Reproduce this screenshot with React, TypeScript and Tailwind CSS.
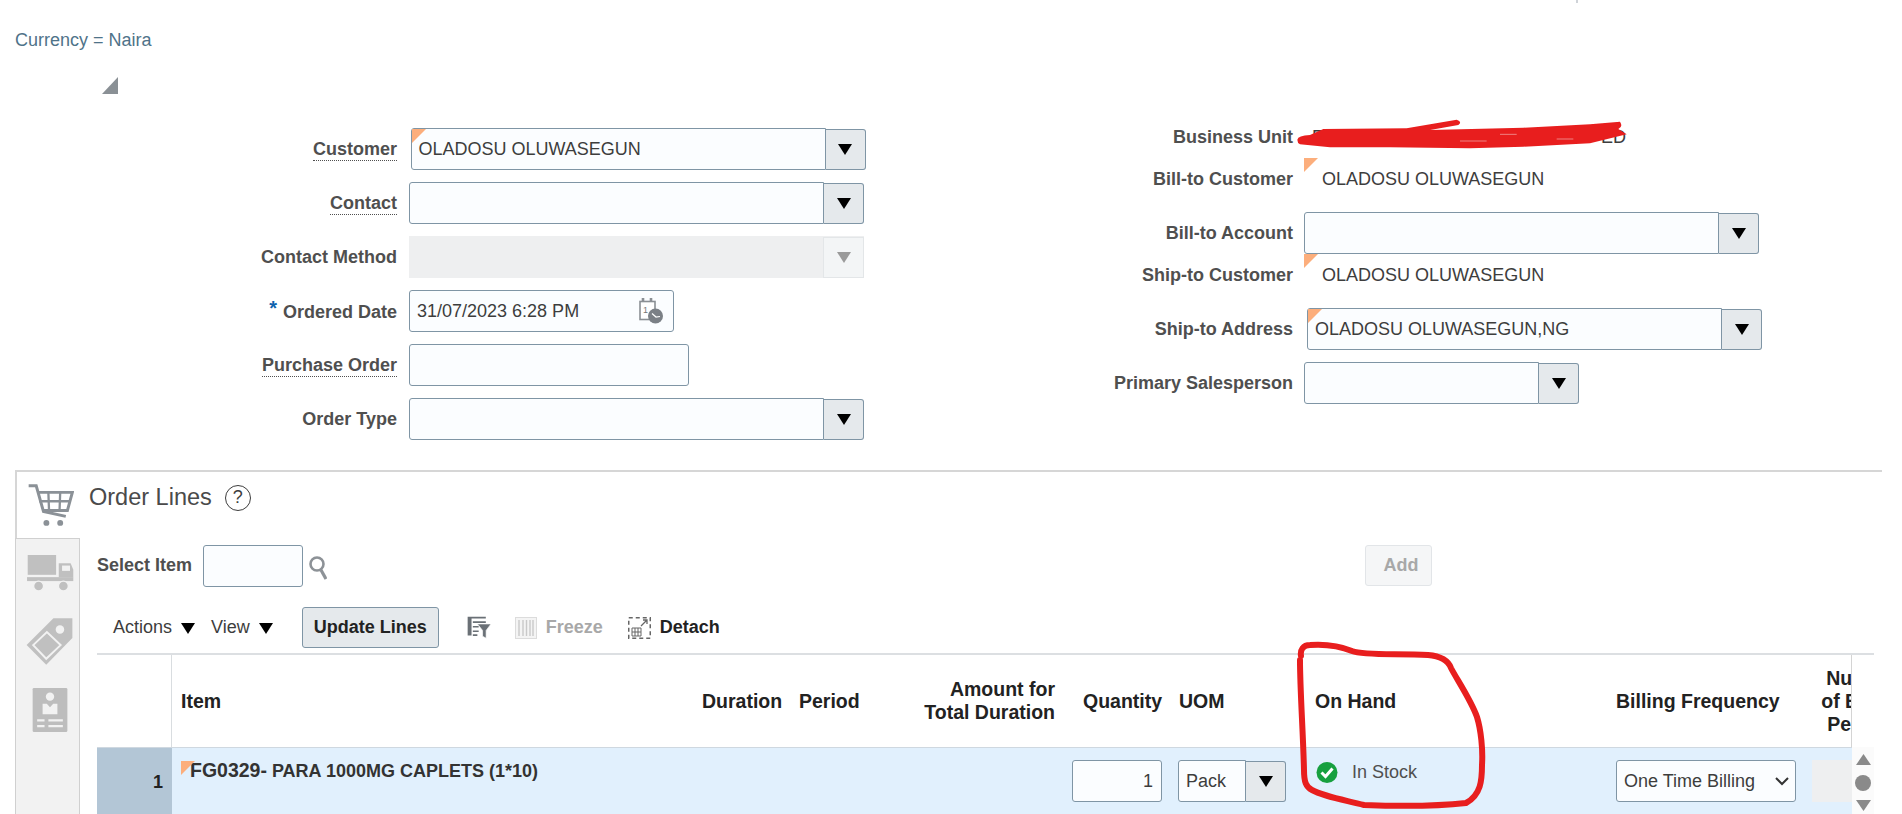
import type { ReactNode } from "react";

const border = "border border-[#7f95a5]";

function Corner({ className = "" }: { className?: string }) {
  return (
    <span
      className={`absolute w-0 h-0 border-t-[14px] border-r-[14px] border-t-[#fcae7c] border-r-transparent ${className}`}
    />
  );
}

function Caret({ muted }: { muted?: boolean }) {
  return (
    <svg width="14" height="11" viewBox="0 0 14 11">
      <path d="M0 0H14L7 11Z" fill={muted ? "#9a9a9a" : "#000"} />
    </svg>
  );
}

function Combo({ w, value, corner, disabled, wBtn = 41, h = 42, text = "text-[18px]" }: { w: number; value?: string; corner?: boolean; disabled?: boolean; wBtn?: number; h?: number; text?: string }) {
  if (disabled) {
    return (
      <div className="flex bg-[#eeeff0]" style={{ width: w + wBtn, height: h }}>
        <div className="flex-1" />
        <div className="flex items-center justify-center bg-[#f3f5f6] border border-[#e3e6e8] mt-[1px]" style={{ width: wBtn }}>
          <Caret muted />
        </div>
      </div>
    );
  }
  return (
    <div className="flex" style={{ height: h }}>
      <div className={`relative flex items-center pl-[7px] bg-[#fbfdff] rounded-l-[3px] ${border} ${text} text-[#3d3d3d]`} style={{ width: w }}>
        {corner && <Corner className="left-0 top-0" />}
        {value}
      </div>
      <div className="flex items-center justify-center bg-[#e5e9ec] rounded-r-[3px] mt-[1px] border border-l-0 border-[#7f95a5]" style={{ width: wBtn - 1 }}>
        <Caret />
      </div>
    </div>
  );
}

function Field({ label, width, dotted, required, children }: { label: string; width: number; dotted?: boolean; required?: boolean; children: ReactNode }) {
  return (
    <div className="flex items-center h-[42px]">
      <div className="shrink-0 text-right text-[18px] font-bold text-[#4f4f4f]" style={{ width }}>
        {required && <span className="relative -top-[3px] mr-[6px] text-[#0e62ae] font-bold text-[20px]">*</span>}
        <span className={dotted ? "border-b border-dotted border-[#4f4f4f] pb-[1px]" : ""}>{label}</span>
      </div>
      <div className="ml-[12px]">{children}</div>
    </div>
  );
}

function ReadOnly({ value }: { value: string }) {
  return (
    <div className="relative h-[42px] flex items-center pl-[18px] text-[18px] text-[#3d3d3d]">
      <Corner className="left-0 top-0" />
      {value}
    </div>
  );
}

function CalendarIcon() {
  return (
    <svg width="25" height="26" viewBox="0 0 25 26">
      <path d="M4 0V5M12 0V5" stroke="#8a8f94" strokeWidth="2.6" />
      <rect x="1" y="3.5" width="15" height="18" fill="#fff" stroke="#8a8f94" strokeWidth="1.6" />
      <text x="4" y="15" fontSize="9" fill="#777" fontFamily="'Liberation Sans', sans-serif">1</text>
      <circle cx="16.5" cy="18" r="7.5" fill="#7b8086" />
      <path d="M13 15.5L17 19L21 18.5" stroke="#fff" strokeWidth="1.2" fill="none" />
    </svg>
  );
}

function CartIcon() {
  return (
    <svg width="46" height="43" viewBox="50 45 140 130">
      <g fill="none" stroke="#8b9197">
        <path d="M52 50H75L97 128L165 143" strokeWidth="9" />
        <path d="M80 70H185L170 125H96" strokeWidth="9" />
        <path d="M84 97H178M112 70L114 125M148 70L146 125" strokeWidth="7" />
      </g>
      <circle cx="106" cy="163" r="9" fill="#8b9197" />
      <circle cx="148" cy="163" r="9" fill="#8b9197" />
    </svg>
  );
}

function TruckIcon() {
  return (
    <svg width="48" height="38" viewBox="47 252 145 115">
      <rect x="52" y="255" width="86" height="60" fill="#c0c0c0" />
      <path d="M146 280H182L190 300V322H146Z" fill="#c0c0c0" />
      <rect x="156" y="287" width="24" height="16" fill="#f2f2f2" />
      <rect x="50" y="322" width="140" height="12" fill="#c0c0c0" />
      <circle cx="85" cy="349" r="15" fill="#c0c0c0" stroke="#f2f2f2" strokeWidth="4" />
      <circle cx="160" cy="349" r="15" fill="#c0c0c0" stroke="#f2f2f2" strokeWidth="4" />
    </svg>
  );
}

function TagIcon() {
  return (
    <svg width="47" height="49" viewBox="46 32 144 150">
      <path d="M48 118L130 36H188V96L108 178Z" fill="#c0c0c0" strokeLinejoin="round" />
      <circle cx="150" cy="70" r="13" fill="#f2f2f2" />
      <path d="M68 118L110 78L152 118L108 160Z" fill="none" stroke="#f2f2f2" strokeWidth="6" />
    </svg>
  );
}

function BadgeIcon() {
  return (
    <svg width="36" height="46" viewBox="64 241 112 141">
      <rect x="66" y="243" width="108" height="137" rx="4" fill="#bdbdbd" />
      <circle cx="120" cy="270" r="13" fill="#f2f2f2" />
      <path d="M97 292H110L120 303L130 292H143V325H97Z" fill="#f2f2f2" />
      <path d="M80 340H103V347H80ZM115 340H160V347H115ZM80 358H103V365H80ZM115 358H160V365H115Z" fill="#f2f2f2" />
    </svg>
  );
}

function SearchIcon() {
  return (
    <svg width="18" height="24" viewBox="0 0 18 24">
      <circle cx="8" cy="8" r="6.5" fill="#fff" stroke="#8d9297" strokeWidth="2.6" />
      <path d="M12 14L17 23" stroke="#8d9297" strokeWidth="3.2" />
    </svg>
  );
}

function FilterIcon() {
  return (
    <svg width="24" height="23" viewBox="20 14 74 70">
      <path d="M22 16H78V21H22ZM22 16H34V74H22ZM38 30H78V35H38ZM38 44H56V49H38ZM38 58H56V63H38ZM38 70H52V75H38Z" fill="#6a7076" />
      <path d="M52 38H94L79 58V82L68 76V58Z" fill="#6a7076" stroke="#fff" strokeWidth="2" />
    </svg>
  );
}

function FreezeIcon() {
  return (
    <svg width="22" height="22" viewBox="0 0 22 22">
      <rect x="0.5" y="0.5" width="21" height="21" fill="#f4f4f4" stroke="#dcdcdc" />
      <path d="M4 3V19M8 3V19M11.5 3V19M15 3V19M18 3V19" stroke="#c9c9c9" strokeWidth="1.4" />
    </svg>
  );
}

function DetachIcon() {
  return (
    <svg width="23" height="22" viewBox="0 0 23 22">
      <rect x="0.75" y="0.75" width="21.5" height="20.5" fill="none" stroke="#666" strokeWidth="1.5" strokeDasharray="4 3" />
      <path d="M13 9L19 3M15 3H19V7" fill="none" stroke="#666" strokeWidth="1.3" />
      <path d="M4 11H13V19H4ZM4 15H13M7 11V19M10 11V19" fill="none" stroke="#666" strokeWidth="1" />
    </svg>
  );
}

function HeaderCell({ children, className = "" }: { children?: ReactNode; className?: string }) {
  return <div className={`flex items-center text-[19.5px] leading-[23px] font-bold text-[#222] ${className}`}>{children}</div>;
}

export default function App() {
  return (
    <div className="relative w-[1902px] h-[814px] overflow-hidden bg-white font-['Liberation_Sans',Arial,sans-serif]">
      <span className="absolute left-[1576px] top-0 w-[2px] h-[3px] bg-[#cfd3d8]" />

      <div className="pl-[15px] pt-[29px] h-[51px] text-[18px] leading-[22px] text-[#4f7389]">Currency = Naira</div>

      <svg className="block ml-[102px] mt-[26px]" width="16" height="17" viewBox="0 0 16 17">
        <path d="M16 0V17H0Z" fill="#8a9095" />
      </svg>

      <div className="flex mt-[34px] h-[312px]">
        <div className="w-[900px] shrink-0 flex flex-col gap-[12px]">
          <Field label="Customer" width={397} dotted>
            <div className="ml-[1.5px]">
              <Combo w={415} value="OLADOSU OLUWASEGUN" corner />
            </div>
          </Field>
          <Field label="Contact" width={397} dotted>
            <Combo w={415} />
          </Field>
          <Field label="Contact Method" width={397}>
            <Combo w={414} disabled />
          </Field>
          <Field label="Ordered Date" width={397} required>
            <div className={`flex items-center justify-between w-[265px] h-[42px] pl-[7px] pr-[9px] bg-[#fbfdff] rounded-[3px] ${border} text-[18px] text-[#3d3d3d]`}>
              31/07/2023 6:28 PM
              <CalendarIcon />
            </div>
          </Field>
          <Field label="Purchase Order" width={397} dotted>
            <div className={`w-[280px] h-[42px] bg-[#fbfdff] rounded-[3px] ${border}`} />
          </Field>
          <Field label="Order Type" width={397}>
            <Combo w={415} />
          </Field>
        </div>

        <div className="flex flex-col">
          <div className="flex items-center h-[18px]">
            <div className="w-[393px] text-right text-[18px] font-bold text-[#4f4f4f]">Business Unit</div>
            <div className="ml-[19px] w-[314px] flex justify-between text-[18px] text-[#3d3d3d]">
              <span>E</span>
              <span>ED</span>
            </div>
          </div>
          <div className="mt-[12px] flex flex-col gap-[12px]">
            <Field label="Bill-to Customer" width={393}>
              <div className="-ml-[1px]">
                <ReadOnly value="OLADOSU OLUWASEGUN" />
              </div>
            </Field>
            <div className="flex flex-col">
              <Field label="Bill-to Account" width={393}>
                <div className="-ml-[1px]">
                  <Combo w={415} />
                </div>
              </Field>
              <Field label="Ship-to Customer" width={393}>
                <div className="-ml-[1px]">
                  <ReadOnly value="OLADOSU OLUWASEGUN" />
                </div>
              </Field>
            </div>
            <Field label="Ship-to Address" width={393}>
              <div className="ml-[2px]">
                <Combo w={415} value="OLADOSU OLUWASEGUN,NG" corner />
              </div>
            </Field>
            <Field label="Primary Salesperson" width={393}>
              <div className="-ml-[1px]">
                <Combo w={235} />
              </div>
            </Field>
          </div>
        </div>
      </div>

      <div className="flex ml-[15px] mr-[20px] mt-[30px] h-[344px] border-t-2 border-[#d6d6d6]">
        <div className="w-[66px] shrink-0 flex flex-col">
          <div className="h-[66px] flex items-center justify-center pl-[3px] border-l-2 border-[#d6d6d6]">
            <CartIcon />
          </div>
          <div className="flex-1 w-[65px] flex flex-col items-center pt-[15px] pl-[4px] bg-[#f2f2f2] border-x border-t border-[#d0d0d0]">
            <TruckIcon />
            <div className="mt-[25px]">
              <TagIcon />
            </div>
            <div className="mt-[21px]">
              <BadgeIcon />
            </div>
          </div>
        </div>

        <div className="flex-1 min-w-0">
          <div className="flex items-center h-[53px] pb-[2px] pl-[8px] text-[23.5px] text-[#4a4a4a]">
            Order Lines
            <span className="ml-[13px] w-[26px] h-[26px] flex items-center justify-center rounded-full border-[1.5px] border-[#3d3d3d] text-[18px] text-[#3d3d3d]">?</span>
          </div>

          <div className="flex items-center h-[42px] mt-[20px] pl-[16px]">
            <span className="w-[106px] mb-[1px] text-[18px] font-bold text-[#4f4f4f]">Select Item</span>
            <div className={`w-[100px] h-[42px] bg-[#fbfdff] rounded-[3px] ${border}`} />
            <span className="ml-[6px] mt-[3px]"><SearchIcon /></span>
            <div className="ml-[1038px] mb-[1px] w-[67px] h-[41px] flex items-center justify-center pl-[5px] bg-[#f5f6f7] border border-[#e2e5e8] rounded-[3px] text-[18px] font-bold text-[#a8a8a8]">Add</div>
          </div>

          <div className="flex items-center h-[41px] mt-[20px] pl-[32px] text-[18px] text-[#3d3d3d]">
            <span className="mb-[1px]">Actions</span>
            <span className="ml-[9px] mt-[2px]"><Caret /></span>
            <span className="ml-[16px] mb-[1px]">View</span>
            <span className="ml-[9px] mt-[2px]"><Caret /></span>
            <div className="ml-[29px] w-[137px] h-[41px] flex items-center justify-center bg-[#e5e9ec] border border-[#7f95a5] rounded-[3px] font-bold text-[#222]">Update Lines</div>
            <span className="ml-[28px]"><FilterIcon /></span>
            <span className="ml-[24px]"><FreezeIcon /></span>
            <span className="ml-[9px] font-bold text-[#a8a8a8]">Freeze</span>
            <span className="ml-[25px]"><DetachIcon /></span>
            <span className="ml-[9px] font-bold text-[#222]">Detach</span>
          </div>

          <div className="w-[1777px] ml-[16px] mt-[5px] border-t-2 border-[#dcdfe2] grid grid-cols-[75px_521px_97px_90px_185px_105px_136px_301px_198px_47px_22px] grid-rows-[92px_67px]">
            <div className="border-r border-[#d9dde0]" />
            <HeaderCell className="pl-[9px]">Item</HeaderCell>
            <HeaderCell className="pl-[9px]">Duration</HeaderCell>
            <HeaderCell className="pl-[9px]">Period</HeaderCell>
            <HeaderCell className="justify-end pr-[10px] text-right">
              <span className="whitespace-nowrap">Amount for<br />Total Duration</span>
            </HeaderCell>
            <HeaderCell className="pl-[18px]">Quantity</HeaderCell>
            <HeaderCell className="pl-[9px]">UOM</HeaderCell>
            <HeaderCell className="pl-[9px]">On Hand</HeaderCell>
            <HeaderCell className="pl-[9px]">Billing Frequency</HeaderCell>
            <HeaderCell className="overflow-hidden border-r border-[#d4d4d4]">
              <span className="w-[116px] shrink-0 text-center">Number<br />of Billing<br />Periods</span>
            </HeaderCell>
            <div />

            <div className="bg-[#b3c6d6] border-t border-[#cfd8e0] flex items-center justify-end pr-[9px] pt-[2px] text-[18px] font-bold text-[#222]">1</div>
            <div className="relative bg-[#e1f0fd] border-t border-[#cfd8e0] pl-[18px] pt-[8px] font-bold text-[#333]">
              <Corner className="left-[9px] top-[13px]" />
              <span className="text-[19.5px]">FG0329-</span>
              <span className="text-[18px]"> PARA 1000MG CAPLETS (1*10)</span>
            </div>
            <div className="bg-[#e1f0fd] border-t border-[#cfd8e0]" />
            <div className="bg-[#e1f0fd] border-t border-[#cfd8e0]" />
            <div className="bg-[#e1f0fd] border-t border-[#cfd8e0]" />
            <div className="bg-[#e1f0fd] border-t border-[#cfd8e0] pl-[7px] pt-[12px]">
              <div className={`w-[90px] h-[42px] flex items-center justify-end pr-[8px] bg-[#fbfdff] rounded-[3px] ${border} text-[18px] text-[#3d3d3d]`}>1</div>
            </div>
            <div className="bg-[#e1f0fd] border-t border-[#cfd8e0] pl-[8px] pt-[12px]">
              <Combo w={68} wBtn={41} value="Pack" />
            </div>
            <div className="bg-[#e1f0fd] border-t border-[#cfd8e0] pl-[10px] pt-[14px] flex items-start">
              <svg width="22" height="21" viewBox="0 0 22 21">
                <circle cx="11" cy="10.5" r="10.5" fill="#17a03f" />
                <path d="M5.5 10.5L9.5 14.5L16.5 6.5" stroke="#fff" strokeWidth="3" fill="none" />
              </svg>
              <span className="ml-[14px] text-[18px] leading-[20px] text-[#4f4f4f]">In Stock</span>
            </div>
            <div className="bg-[#e1f0fd] border-t border-[#cfd8e0] pl-[9px] pt-[12px]">
              <div className={`w-[180px] h-[42px] flex items-center justify-between pl-[7px] pr-[6px] bg-[#fbfdff] rounded-[3px] ${border} text-[18px] text-[#3d3d3d]`}>
                One Time Billing
                <svg width="14" height="9" viewBox="0 0 14 9">
                  <path d="M1 1L7 7L13 1" stroke="#333" strokeWidth="2" fill="none" />
                </svg>
              </div>
            </div>
            <div className="bg-[#e1f0fd] border-t border-[#cfd8e0] pl-[7px] pt-[12px]">
              <div className="h-[42px] bg-[#eeeff0]" />
            </div>
            <div className="bg-[#fbfbfb] flex flex-col items-center justify-between pt-[7px] pb-[3px]">
              <svg width="15" height="11" viewBox="0 0 15 11"><path d="M7.5 0L15 11H0Z" fill="#8a8a8a" /></svg>
              <span className="w-[16px] h-[16px] rounded-full bg-[#8a8a8a]" />
              <svg width="15" height="11" viewBox="0 0 15 11"><path d="M0 0H15L7.5 11Z" fill="#8a8a8a" /></svg>
            </div>
          </div>
        </div>
      </div>

      {/* marker scribbles drawn over the screenshot */}
      <svg className="absolute left-[1290px] top-[115px]" width="345" height="40" viewBox="0 0 1035 120">
        <path d="M22 74Q24 62 60 60L100 42L350 40L500 14Q518 20 505 30L420 45L700 38L900 28L990 20Q1000 35 985 42L1010 58L900 85L700 95L540 100L300 97L120 97L30 88Q22 84 22 74Z" fill="#e81e1e" />
        <path d="M510 78H590M630 58H680M800 72H850" stroke="#f3b5b5" strokeWidth="2" fill="none" />
      </svg>
      <svg className="absolute left-[1290px] top-[635px]" width="200" height="179" viewBox="1290 635 200 179">
        <path d="M1301 656C1300 650 1303 645 1310 645C1325 644 1340 646 1352 651C1365 656 1400 653 1428 655C1440 656 1448 660 1451 668C1456 678 1471 700 1477 717C1481 730 1483 750 1482 765C1482 780 1481 795 1466 803C1430 807 1390 806 1364 805C1345 800 1325 797 1312 790C1306 787 1304 782 1304 770C1303 730 1300 690 1300 660" fill="none" stroke="#e81e1e" strokeWidth="6" strokeLinejoin="round" strokeLinecap="round" />
      </svg>
    </div>
  );
}
